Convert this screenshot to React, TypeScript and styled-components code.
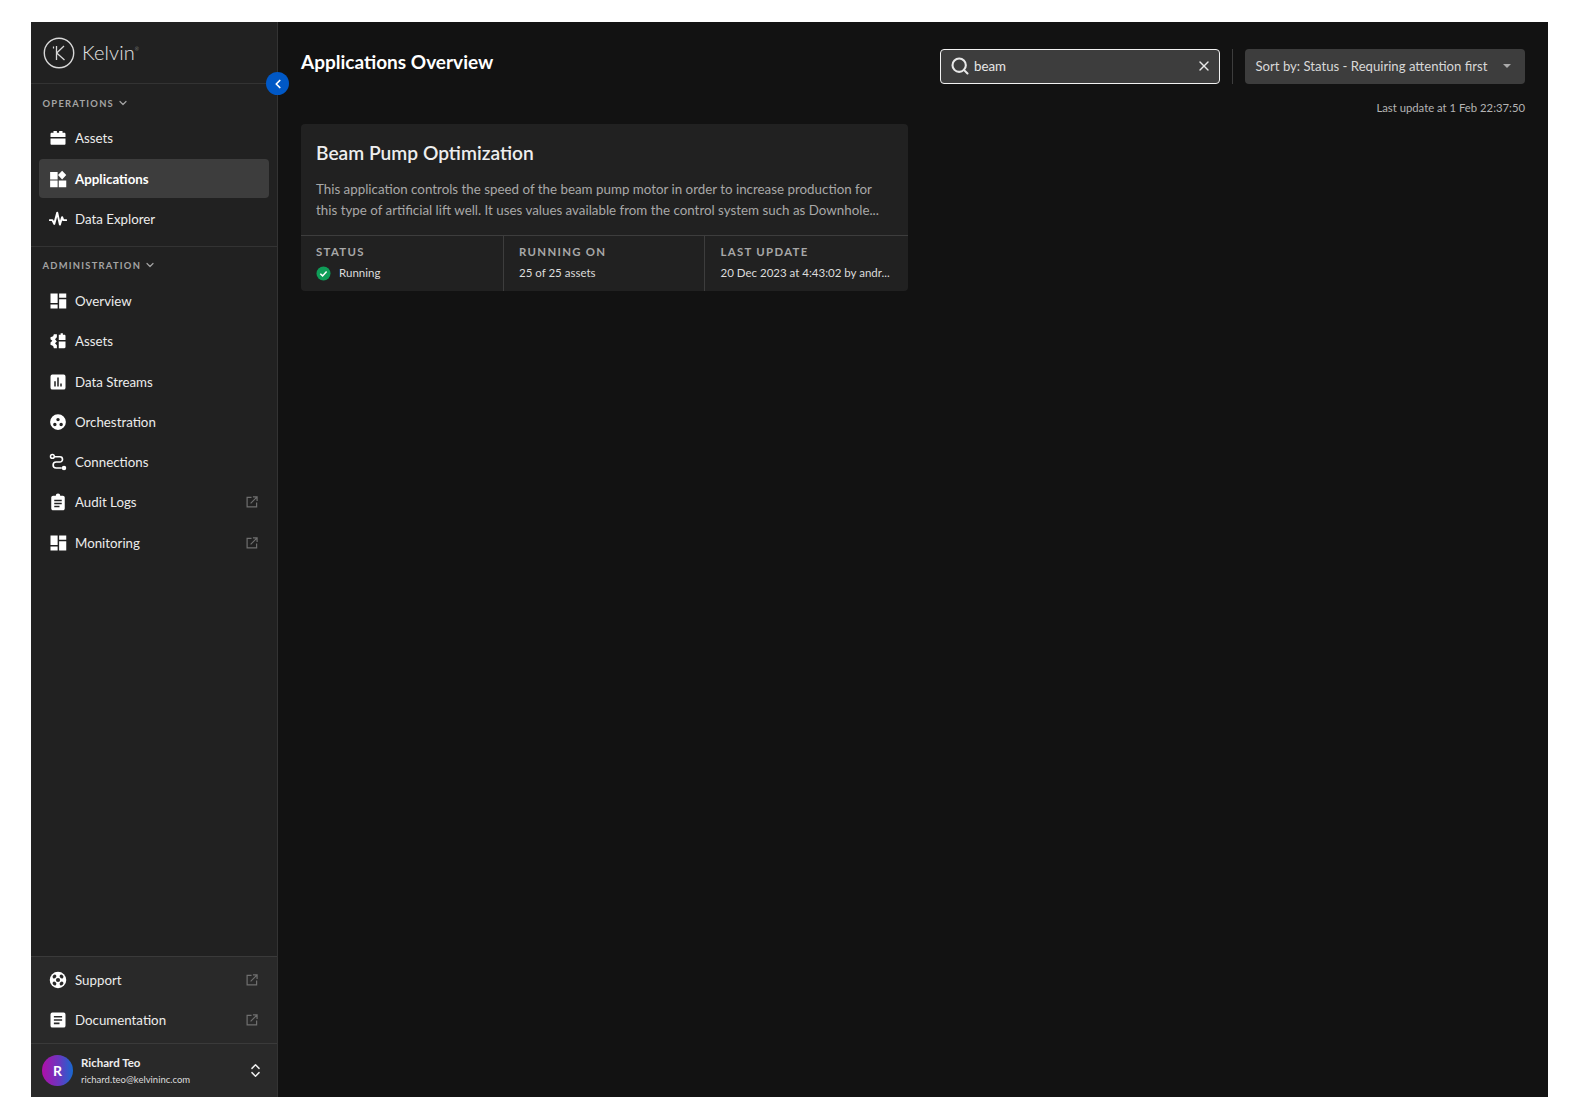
import React from "react";
import styled, { createGlobalStyle } from "styled-components";
import { Search, X, ChevronDown, ChevronLeft, ChevronsUpDown } from "lucide-react";

const Global = createGlobalStyle`
  html, body { margin: 0; padding: 0; background: #fff; }
  * { box-sizing: border-box; }
  body { font-family: "Lato", "Liberation Sans", sans-serif; }
`;

const Page = styled.div`
  width: 1580px;
  height: 1120px;
  padding: 22px 32px 23px 31px;
`;
const Frame = styled.div`
  display: flex;
  height: 100%;
  background: #121212;
`;
const Sidebar = styled.aside`
  position: relative;
  display: flex;
  flex-direction: column;
  width: 247px;
  flex: none;
  background: #212121;
  border-right: 1px solid #333;
`;
const LogoBar = styled.div`
  display: flex;
  align-items: center;
  gap: 7px;
  height: 62px;
  padding-left: 12px;
  border-bottom: 1px solid #333;
`;
const LogoText = styled.span`
  font-size: 20px;
  font-weight: 300;
  color: #e4e4e4;
  letter-spacing: 0.1px;
  margin-top: -2px;
`;
const LogoMark = styled.sup`
  font-size: 5px;
  line-height: 0;
  vertical-align: 9px;
  color: #bbb;
`;
const CollapseButton = styled.button`
  position: absolute;
  top: 50px;
  right: -12px;
  width: 23px;
  height: 23px;
  border: 0;
  border-radius: 50%;
  padding: 0;
  display: flex;
  align-items: center;
  justify-content: center;
  background: #0058c6;
  color: #fff;
  z-index: 2;
`;
const Section = styled.nav`
  display: flex;
  flex-direction: column;
  gap: 1.3px;
  padding: 0 8px 7.8px;
  & + & {
    border-top: 1px solid #333;
  }
`;
const SectionTitle = styled.div<{ $tight?: boolean }>`
  display: flex;
  align-items: center;
  gap: 3px;
  height: ${(p) => (p.$tight ? "33px" : "33.500px")};
  padding: ${(p) => (p.$tight ? "3px" : "4.500px")} 0 0 3.500px;
  font-size: 9.4px;
  font-weight: 700;
  letter-spacing: 1.25px;
  color: #a4a4a4;
`;
const Item = styled.a<{ $active?: boolean }>`
  display: flex;
  align-items: center;
  height: 39px;
  padding: 0 11px 0 10px;
  border-radius: 4px;
  font-size: 13.3px;
  font-weight: ${(p) => (p.$active ? 700 : 400)};
  color: ${(p) => (p.$active ? "#fff" : "#ececec")};
  background: ${(p) => (p.$active ? "#3d3d3d" : "transparent")};
`;
const ItemIcon = styled.span`
  display: flex;
  width: 18px;
  height: 18px;
  margin-right: 8px;
  flex: none;
  color: #fff;
`;
const ItemLabel = styled.span`
  flex: 1;
`;
const Spacer = styled.div`
  flex: 1;
`;
const Footer = styled.div`
  display: flex;
  flex-direction: column;
  gap: 1px;
  padding: 4px 8px 3.300px;
  background: #292929;
  border-top: 1px solid #3a3a3a;
`;
const UserBar = styled.div`
  display: flex;
  align-items: center;
  height: 54px;
  padding: 0 13px 0 11px;
  background: #292929;
  border-top: 1px solid #3a3a3a;
`;
const Avatar = styled.div`
  width: 31px;
  height: 31px;
  flex: none;
  border-radius: 50%;
  display: flex;
  align-items: center;
  justify-content: center;
  background: linear-gradient(90deg, #b00fa8, #6a37c0 55%, #1769cf);
  color: #fff;
  font-size: 14px;
  font-weight: 700;
`;
const UserText = styled.div`
  display: flex;
  flex: 1;
  flex-direction: column;
  gap: 5px;
  margin: -1px 0 0 8px;
`;
const UserName = styled.span`
  font-size: 11.5px;
  font-weight: 700;
  color: #eee;
`;
const UserMail = styled.span`
  font-size: 9.5px;
  color: #ddd;
`;
const Main = styled.main`
  flex: 1;
  padding: 27px 23px 0 23px;
`;
const TopRow = styled.div`
  display: flex;
  align-items: flex-start;
`;
const Title = styled.h1`
  flex: 1;
  margin: 0;
  font-size: 19px;
  line-height: 26px;
  font-weight: 700;
  color: #fff;
`;
const SearchBox = styled.div`
  display: flex;
  align-items: center;
  width: 280px;
  height: 35px;
  padding: 0 7px 1px 9px;
  border: 1.500px solid #f2f2f2;
  border-radius: 4px;
  background: #3d3d3d;
  color: #e8e8e8;
  font-size: 13.3px;
`;
const SearchValue = styled.span`
  flex: 1;
  margin-left: 4px;
`;
const Separator = styled.div`
  width: 1px;
  height: 35px;
  margin: 0 12px;
  background: #3d3d3d;
`;
const SortSelect = styled.div`
  display: flex;
  align-items: center;
  justify-content: space-between;
  width: 280px;
  height: 35px;
  padding: 0 14px 1px 10.500px;
  border-radius: 4px;
  background: #3d3d3d;
  color: #d8d8d8;
  font-size: 13.15px;
`;
const Caret = styled.span`
  width: 0;
  height: 0;
  border-left: 4.500px solid transparent;
  border-right: 4.500px solid transparent;
  border-top: 4.500px solid #aaa;
`;
const UpdateNote = styled.div`
  margin-top: 16px;
  text-align: right;
  font-size: 11.3px;
  line-height: 16px;
  color: #b4b4b4;
`;
const Card = styled.article`
  width: 607px;
  margin-top: 8px;
  border-radius: 4px;
  background: #212121;
`;
const CardBody = styled.div`
  height: 112px;
  padding: 15px 15px 0;
  border-bottom: 1px solid #3d3d3d;
`;
const CardTitle = styled.h2`
  margin: 0;
  font-size: 19.2px;
  line-height: 28px;
  font-weight: 600;
  color: #eee;
`;
const CardText = styled.p`
  margin: 12px 0 0;
  font-size: 13.35px;
  line-height: 21px;
  color: #a8a8a8;
  white-space: nowrap;
`;
const Meta = styled.div`
  display: grid;
  grid-template-columns: 201.5px 201.5px 1fr;
  height: 55px;
`;
const MetaCell = styled.div`
  min-width: 0;
  padding: 8px 15px 0 15px;
  & + & {
    border-left: 1px solid #3d3d3d;
    padding-left: 15.500px;
  }
`;
const MetaLabel = styled.div`
  font-size: 11.4px;
  line-height: 15px;
  font-weight: 700;
  letter-spacing: 1.3px;
  color: #a8a8a8;
`;
const MetaValue = styled.div`
  display: flex;
  align-items: center;
  gap: 8px;
  margin-top: 6px;
  font-size: 11.5px;
  line-height: 16px;
  color: #dcdcdc;
  white-space: nowrap;
`;

const Glyph = ({ children }: { children: React.ReactNode }) => (
  <svg width={18} height={18} viewBox="0 0 24 24" fill="currentColor">
    {children}
  </svg>
);

const icons: Record<string, React.ReactNode> = {
  assets: (
    <Glyph>
      <path d="M2 10.500V6.500C2 5.700 2.700 5 3.500 5H6V2.500h4.500V5h3V2.500H18V5h2.500c.8 0 1.500.7 1.500 1.500v4H2zM2 12.500h20v7c0 .8-.7 1.500-1.500 1.500h-17C2.700 21 2 20.300 2 19.500z" />
    </Glyph>
  ),
  apps: (
    <Glyph>
      <path d="M1.500 2.500h10v10h-10zM1.500 14h10v9h-10zM13 14h10v9H13zM17.500 1l5.500 5.500-5.500 6-5.500-6z" />
    </Glyph>
  ),
  pulse: (
    <Glyph>
      <path
        d="M1 13.500h3.500l2.500 5 4-15 3.500 16 3-10 1.500 4H23"
        fill="none"
        stroke="currentColor"
        strokeWidth="2.600"
        strokeLinejoin="round"
        strokeLinecap="round"
      />
    </Glyph>
  ),
  dash: (
    <Glyph>
      <path d="M2 2h9.500v12.500H2zM2 16.500h9.500V22H2zM13.500 2H23v5.500h-9.500zM13.500 9.500H23V22h-9.500z" />
    </Glyph>
  ),
  adminAssets: (
    <Glyph>
      <path d="M13 3.500h2.500V1.500h3V3.500h2C21.300 3.500 22 4.200 22 5v5.500h-9zM13 12.500h9v7.500c0 .8-.7 1.500-1.500 1.500H13zM6.500 3h4v4L8 9.500l2.500 3-2.500 2.500 2.500 2.500v4h-4l-1-3-3.500-1.500V14l2.500-2.500L2 9.500V7l3.500-1.500z" />
    </Glyph>
  ),
  streams: (
    <Glyph>
      <path
        fillRule="evenodd"
        d="M4.500 2h15A2.500 2.500 0 0 1 22 4.500v15a2.500 2.500 0 0 1-2.500 2.500h-15A2.500 2.500 0 0 1 2 19.500v-15A2.500 2.500 0 0 1 4.500 2zM7 11v7h2v-7zm4-5v12h2V6zm4 8v4h2v-4z"
      />
    </Glyph>
  ),
  orchestration: (
    <Glyph>
      <path
        fillRule="evenodd"
        d="M12 1.500a10.500 10.500 0 1 1 0 21 10.500 10.500 0 0 1 0-21zM12 6.500a2.300 2.300 0 1 0 0 4.600 2.300 2.300 0 0 0 0-4.600zM7.800 13a2.300 2.300 0 1 0 0 4.600 2.300 2.300 0 0 0 0-4.600zM16.200 13a2.300 2.300 0 1 0 0 4.600 2.300 2.300 0 0 0 0-4.600z"
      />
    </Glyph>
  ),
  connections: (
    <Glyph>
      <circle cx="4.500" cy="4.500" r="2.500" fill="none" stroke="currentColor" strokeWidth="2" />
      <circle cx="20" cy="20" r="3" />
      <path
        d="M7 5h7.500a3.500 3.500 0 0 1 0 7h-5a3.500 3.500 0 0 0 0 8H17"
        fill="none"
        stroke="currentColor"
        strokeWidth="2.200"
      />
    </Glyph>
  ),
  audit: (
    <Glyph>
      <path
        fillRule="evenodd"
        d="M9 3.500a3 3 0 0 1 6 0h3.500C19.900 3.500 21 4.600 21 6v14.500c0 1.400-1.100 2.500-2.500 2.500h-13C4.100 23 3 21.900 3 20.500V6c0-1.400 1.100-2.500 2.500-2.500zM7 9v2h10V9zm0 4v2h10v-2zm0 4v2h7v-2z"
      />
    </Glyph>
  ),
  support: (
    <Glyph>
      <circle cx="12" cy="12" r="11" />
      <g fill="#292929">
        <circle cx="12" cy="12" r="2.800" />
        <ellipse cx="7.300" cy="7.300" rx="2.800" ry="2.200" transform="rotate(-45 7.300 7.300)" />
        <ellipse cx="16.700" cy="7.300" rx="2.800" ry="2.200" transform="rotate(45 16.700 7.300)" />
        <ellipse cx="7.300" cy="16.700" rx="2.800" ry="2.200" transform="rotate(45 7.300 16.700)" />
        <ellipse cx="16.700" cy="16.700" rx="2.800" ry="2.200" transform="rotate(-45 16.700 16.700)" />
      </g>
    </Glyph>
  ),
  doc: (
    <Glyph>
      <path
        fillRule="evenodd"
        d="M4.500 2h15A2.500 2.500 0 0 1 22 4.500v15a2.500 2.500 0 0 1-2.500 2.500h-15A2.500 2.500 0 0 1 2 19.500v-15A2.500 2.500 0 0 1 4.500 2zM6.500 6.500v2.200h11V6.500zm0 4.400v2.200h11v-2.200zm0 4.400v2.200h7.500v-2.200z"
      />
    </Glyph>
  ),
};

const External = () => (
  <svg width="12" height="12" viewBox="0 0 13 13" fill="none" stroke="#6f6f6f" strokeWidth="1.300">
    <path d="M6 1.500H1.200v10.300h10.300V7" />
    <path d="M5 8l6.500-6.500M7.500 1h4.500v4.500" />
  </svg>
);

const NavItem = ({ icon, label, active, ext }: { icon: string; label: string; active?: boolean; ext?: boolean }) => (
  <Item $active={active}>
    <ItemIcon>{icons[icon]}</ItemIcon>
    <ItemLabel>{label}</ItemLabel>
    {ext && <External />}
  </Item>
);

const Logo = () => (
  <svg width="32" height="32" viewBox="0 0 32 32" fill="none" stroke="#d8d8d8">
    <circle cx="16" cy="16" r="14.700" strokeWidth="1.400" />
    <path d="M13.500 9v14M21 9l-7.300 7 7.800 7" strokeWidth="1.300" />
    <path d="M10.500 9.500v2" strokeWidth="1.200" />
  </svg>
);

const RunningDot = () => (
  <svg width="15" height="15" viewBox="0 0 15 15">
    <circle cx="7.500" cy="7.500" r="7" fill="#0f9d58" />
    <path d="M4.300 7.700l2.300 2.200 4-4.300" fill="none" stroke="#fff" strokeWidth="1.500" />
  </svg>
);

export default function App() {
  return (
    <Page>
      <Global />
      <Frame>
        <Sidebar>
          <LogoBar>
            <Logo />
            <LogoText>
              Kelvin<LogoMark>®</LogoMark>
            </LogoText>
          </LogoBar>
          <CollapseButton aria-label="Collapse">
            <ChevronLeft size={14} strokeWidth={3} />
          </CollapseButton>
          <Section>
            <SectionTitle>
              OPERATIONS <ChevronDown size={12} strokeWidth={2.4} />
            </SectionTitle>
            <NavItem icon="assets" label="Assets" />
            <NavItem icon="apps" label="Applications" active />
            <NavItem icon="pulse" label="Data Explorer" />
          </Section>
          <Section>
            <SectionTitle $tight>
              ADMINISTRATION <ChevronDown size={12} strokeWidth={2.4} />
            </SectionTitle>
            <NavItem icon="dash" label="Overview" />
            <NavItem icon="adminAssets" label="Assets" />
            <NavItem icon="streams" label="Data Streams" />
            <NavItem icon="orchestration" label="Orchestration" />
            <NavItem icon="connections" label="Connections" />
            <NavItem icon="audit" label="Audit Logs" ext />
            <NavItem icon="dash" label="Monitoring" ext />
          </Section>
          <Spacer />
          <Footer>
            <NavItem icon="support" label="Support" ext />
            <NavItem icon="doc" label="Documentation" ext />
          </Footer>
          <UserBar>
            <Avatar>R</Avatar>
            <UserText>
              <UserName>Richard Teo</UserName>
              <UserMail>richard.teo@kelvininc.com</UserMail>
            </UserText>
            <ChevronsUpDown size={17} color="#eee" strokeWidth={2} />
          </UserBar>
        </Sidebar>
        <Main>
          <TopRow>
            <Title>Applications Overview</Title>
            <SearchBox>
              <Search size={20} strokeWidth={2.5} />
              <SearchValue>beam</SearchValue>
              <X size={16} strokeWidth={2} />
            </SearchBox>
            <Separator />
            <SortSelect>
              Sort by: Status - Requiring attention first
              <Caret />
            </SortSelect>
          </TopRow>
          <UpdateNote>Last update at 1 Feb 22:37:50</UpdateNote>
          <Card>
            <CardBody>
              <CardTitle>Beam Pump Optimization</CardTitle>
              <CardText>
                This application controls the speed of the beam pump motor in order to increase production for
                <br />
                this type of artificial lift well. It uses values available from the control system such as Downhole...
              </CardText>
            </CardBody>
            <Meta>
              <MetaCell>
                <MetaLabel>STATUS</MetaLabel>
                <MetaValue>
                  <RunningDot />
                  Running
                </MetaValue>
              </MetaCell>
              <MetaCell>
                <MetaLabel>RUNNING ON</MetaLabel>
                <MetaValue>25 of 25 assets</MetaValue>
              </MetaCell>
              <MetaCell>
                <MetaLabel>LAST UPDATE</MetaLabel>
                <MetaValue>20 Dec 2023 at 4:43:02 by andr...</MetaValue>
              </MetaCell>
            </Meta>
          </Card>
        </Main>
      </Frame>
    </Page>
  );
}
